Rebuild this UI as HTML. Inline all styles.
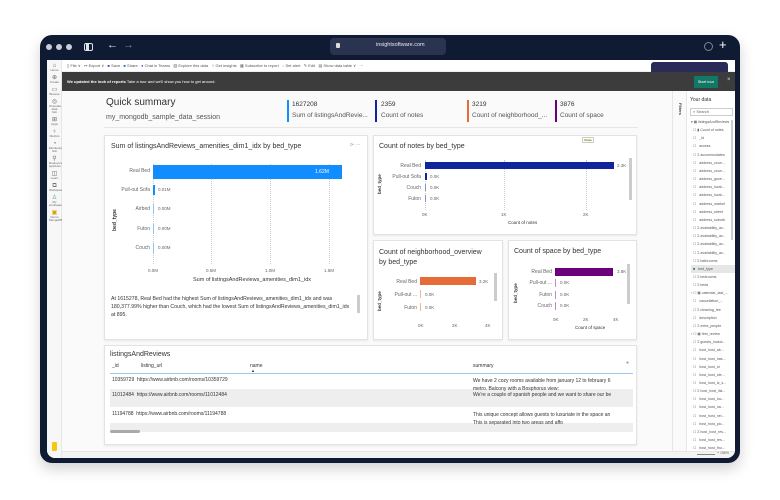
<!DOCTYPE html>
<html><head><meta charset="utf-8"><style>
*{margin:0;padding:0;box-sizing:border-box}
body{width:780px;height:500px;background:#fff;font-family:"Liberation Sans",sans-serif;position:relative;overflow:hidden;color:#333}
.a{position:absolute}
.win{left:40px;top:35px;width:700px;height:428px;background:#0f1a33;border-radius:12px;box-shadow:0 6px 14px rgba(0,0,0,.18)}
.content{left:47px;top:60px;width:688px;height:398px;background:#fff;border-radius:0 0 8px 8px;overflow:hidden}
.t{font-size:4px;color:#444;white-space:nowrap}
.card{background:#fff;border:1px solid #e3e3e3;box-shadow:0 1px 2px rgba(0,0,0,.08)}
.ttl{font-size:7px;color:#333;white-space:nowrap}
.lbl{font-size:5px;color:#666;white-space:nowrap;text-align:right}
.ax{font-size:4.5px;color:#666;white-space:nowrap}
.grid{border-left:1px dotted #ccc}
.row{font-size:5px;color:#333;white-space:nowrap}
</style></head><body>
<div class="a win"></div>
<!-- browser bar -->
<div class="a" style="left:46px;top:44px;width:6px;height:6px;border-radius:50%;background:#c8ccd6"></div>
<div class="a" style="left:56px;top:44px;width:6px;height:6px;border-radius:50%;background:#c8ccd6"></div>
<div class="a" style="left:66px;top:44px;width:6px;height:6px;border-radius:50%;background:#c8ccd6"></div>
<div class="a" style="left:84px;top:43px;width:9px;height:8px;border:1.3px solid #e0e3ea;border-radius:2px"></div>
<div class="a" style="left:86px;top:43px;width:3px;height:8px;background:#e0e3ea"></div>
<div class="a" style="left:107px;top:39px;color:#e8eaf0;font-size:11px">←</div>
<div class="a" style="left:123px;top:39px;color:#7d8497;font-size:11px">→</div>
<div class="a" style="left:330px;top:38px;width:116px;height:17px;background:#2a3450;border-radius:4px"></div>
<div class="a" style="left:336px;top:43px;width:4px;height:5px;background:#ddd;border-radius:1px"></div>
<div class="a" style="left:376px;top:42px;font-size:5.5px;color:#e8eaf0">insightsoftware.com</div>
<div class="a" style="left:704px;top:42px;width:9px;height:9px;border:1px solid #7d8497;border-radius:50%"></div>
<div class="a" style="left:719px;top:37px;color:#fff;font-size:13px">+</div>

<div class="a content">
 <!-- toolbar -->
 <div class="a" style="left:15px;top:0;width:673px;height:12px;background:#fff;border-bottom:1px solid #eee"></div>
 <div class="a t" style="left:20px;top:3px;color:#555">▯ File ∨ &nbsp; ↦ Export ∨ &nbsp; <span style="color:#5b4cb0">■</span> Save &nbsp; <span style="color:#3b6fb6">■</span> Share &nbsp; <span style="color:#5b5fc7">●</span> Chat in Teams &nbsp; ▥ Explore this data &nbsp; ♀ Get insights &nbsp; ▦ Subscribe to report &nbsp; ◌ Set alert &nbsp; ✎ Edit &nbsp; ▤ Show data table ∨ &nbsp; ···</div>
 <div class="a" style="left:604px;top:2px;width:77px;height:14px;background:#2b2b5a;border-radius:3px"></div>
 <!-- left nav -->
 <div class="a" style="left:0;top:0;width:15px;height:398px;background:#f7f7f7;border-right:1px solid #e6e6e6"></div>
 <div class="a" style="left:2px;top:3px;width:11px;line-height:1;font-size:3px;color:#666;text-align:center">
  <div style="font-size:6px">⌂</div>Home<br><br>
  <div style="font-size:6px">⊕</div>Create<br><br>
  <div style="font-size:6px">▭</div>Browse<br><br>
  <div style="font-size:6px">◎</div>OneLake<br>data hub<br><br>
  <div style="font-size:6px">⊞</div>Apps<br><br>
  <div style="font-size:6px">♀</div>Metrics<br><br>
  <div style="font-size:6px">◔</div>Monitoring<br>hub<br><br>
  <div style="font-size:6px">⚲</div>Deployment<br>pipelines<br><br>
  <div style="font-size:6px">◫</div>Learn<br><br>
  <div style="font-size:6px">⧉</div>Workspaces<br><br>
  <div style="font-size:6px;color:#4aa88f">♙</div>My<br>workspace<br><br>
  <div style="font-size:6px;color:#d9a300">▣</div>Demo<br>MongoDB
 </div>
 <div class="a" style="left:5px;top:382px;width:5px;height:9px;background:#f2c811;border-radius:1px"></div>
 <!-- banner -->
 <div class="a" style="left:15px;top:12px;width:673px;height:19px;background:#3c3c3c"></div>
 <div class="a" style="left:20px;top:19px;font-size:4px;color:#fff;white-space:nowrap"><b>We updated the look of reports</b> Take a tour and we'll show you how to get around.</div>
 <div class="a" style="left:647px;top:16px;width:24px;height:12px;background:#117865;color:#fff;font-size:4px;text-align:center;line-height:12px">Start tour</div>
 <div class="a" style="left:680px;top:17px;font-size:6px;color:#ddd">×</div>
 <!-- canvas -->
 <div class="a" style="left:15px;top:31px;width:610px;height:360px;background:#fafafa"></div>
 <div class="a" style="left:59px;top:37px;font-size:10px;color:#333">Quick summary</div>
 <div class="a" style="left:59px;top:54px;font-size:7px;color:#555">my_mongodb_sample_data_session</div>
 <div class="a" style="left:240px;top:40px;width:1.5px;height:22px;background:#118dff"></div>
 <div class="a" style="left:245px;top:41px;font-size:6.5px;color:#333">1627208</div>
 <div class="a" style="left:245px;top:52px;font-size:6.5px;color:#555">Sum of listingsAndRevie...</div>
 <div class="a" style="left:328px;top:40px;width:1.5px;height:22px;background:#12239e"></div>
 <div class="a" style="left:334px;top:41px;font-size:6.5px;color:#333">2359</div>
 <div class="a" style="left:334px;top:52px;font-size:6.5px;color:#555">Count of notes</div>
 <div class="a" style="left:420px;top:40px;width:1.5px;height:22px;background:#e66c37"></div>
 <div class="a" style="left:425px;top:41px;font-size:6.5px;color:#333">3219</div>
 <div class="a" style="left:425px;top:52px;font-size:6.5px;color:#555">Count of neighborhood_...</div>
 <div class="a" style="left:508px;top:40px;width:1.5px;height:22px;background:#6b007b"></div>
 <div class="a" style="left:513px;top:41px;font-size:6.5px;color:#333">3876</div>
 <div class="a" style="left:513px;top:52px;font-size:6.5px;color:#555">Count of space</div>
 <div class="a" style="left:57px;top:67px;width:534px;height:1px;background:#e6e6e6"></div>

 <!-- card 1 -->
 <div class="a card" style="left:57px;top:75px;width:264px;height:205px">
  <div class="a ttl" style="left:6px;top:7px">Sum of listingsAndReviews_amenities_dim1_idx by bed_type</div>
  <div class="a" style="left:245px;top:6px;font-size:5px;color:#999">⊳ ···</div>
  <div class="a" style="left:7px;top:60px;font-size:5px;font-weight:bold;transform:rotate(-90deg);transform-origin:left top;top:95px">bed_type</div>
  <div class="a grid" style="left:48px;top:28px;height:100px"></div>
  <div class="a grid" style="left:106px;top:28px;height:100px"></div>
  <div class="a grid" style="left:165px;top:28px;height:100px"></div>
  <div class="a grid" style="left:224px;top:28px;height:100px"></div>
  <div class="a lbl" style="left:0;top:32px;width:45px">Real Bed</div>
  <div class="a" style="left:48px;top:29px;width:189px;height:14px;background:#118dff"></div>
  <div class="a" style="left:210px;top:33px;font-size:5px;color:#fff">1.62M</div>
  <div class="a lbl" style="left:0;top:51px;width:45px">Pull-out Sofa</div>
  <div class="a lbl" style="left:0;top:70px;width:45px">Airbed</div>
  <div class="a lbl" style="left:0;top:90px;width:45px">Futon</div>
  <div class="a lbl" style="left:0;top:109px;width:45px">Couch</div>
  <div class="a" style="left:48px;top:49px;width:1.5px;height:10px;background:#118dff"></div>
  <div class="a" style="left:48px;top:68px;width:1px;height:10px;background:#8cc4ff"></div>
  <div class="a" style="left:48px;top:88px;width:1px;height:10px;background:#8cc4ff"></div>
  <div class="a" style="left:48px;top:107px;width:1px;height:10px;background:#8cc4ff"></div>
  <div class="a ax" style="left:53px;top:51px">0.01M</div>
  <div class="a ax" style="left:53px;top:70px">0.00M</div>
  <div class="a ax" style="left:53px;top:90px">0.00M</div>
  <div class="a ax" style="left:53px;top:109px">0.00M</div>
  <div class="a ax" style="left:43px;top:132px">0.0M</div>
  <div class="a ax" style="left:101px;top:132px">0.5M</div>
  <div class="a ax" style="left:160px;top:132px">1.0M</div>
  <div class="a ax" style="left:219px;top:132px">1.5M</div>
  <div class="a" style="left:88px;top:141px;font-size:5.5px;color:#333;white-space:nowrap">Sum of listingsAndReviews_amenities_dim1_idx</div>
  <div class="a" style="left:6px;top:159px;width:240px;font-size:5.2px;line-height:8px;color:#333">At 1615278, Real Bed had the highest Sum of listingsAndReviews_amenities_dim1_idx and was 180,377.99% higher than Couch, which had the lowest Sum of listingsAndReviews_amenities_dim1_idx at 895.</div>
  <div class="a" style="left:252px;top:159px;width:3px;height:18px;background:#ccc"></div>
 </div>

 <!-- card 2 -->
 <div class="a card" style="left:326px;top:75px;width:264px;height:100px">
  <div class="a ttl" style="left:5px;top:7px">Count of notes by bed_type</div>
  <div class="a" style="left:208px;top:1px;font-size:3px;background:#ffffe0;border:1px solid #ccc;padding:0 1px">Close</div>
  <div class="a" style="left:3px;top:58px;font-size:4.5px;font-weight:bold;transform:rotate(-90deg);transform-origin:left top">bed_type</div>
  <div class="a grid" style="left:51px;top:24px;height:50px"></div>
  <div class="a grid" style="left:130px;top:24px;height:50px"></div>
  <div class="a grid" style="left:212px;top:24px;height:50px"></div>
  <div class="a lbl" style="left:0;top:27px;width:47px">Real Bed</div>
  <div class="a lbl" style="left:0;top:38px;width:47px">Pull-out Sofa</div>
  <div class="a lbl" style="left:0;top:49px;width:47px">Couch</div>
  <div class="a lbl" style="left:0;top:60px;width:47px">Futon</div>
  <div class="a" style="left:51px;top:26px;width:189px;height:7px;background:#12239e"></div>
  <div class="a ax" style="left:243px;top:27px">2.3K</div>
  <div class="a" style="left:51px;top:37px;width:1.5px;height:7px;background:#12239e"></div>
  <div class="a" style="left:51px;top:48px;width:1px;height:7px;background:#8890d0"></div>
  <div class="a" style="left:51px;top:59px;width:1px;height:7px;background:#8890d0"></div>
  <div class="a ax" style="left:56px;top:38px">0.0K</div>
  <div class="a ax" style="left:56px;top:49px">0.0K</div>
  <div class="a ax" style="left:56px;top:60px">0.0K</div>
  <div class="a" style="left:255px;top:22px;width:3px;height:42px;background:#ccc"></div>
  <div class="a ax" style="left:48px;top:76px">0K</div>
  <div class="a ax" style="left:127px;top:76px">1K</div>
  <div class="a ax" style="left:209px;top:76px">2K</div>
  <div class="a" style="left:134px;top:84px;font-size:4.5px;color:#333">Count of notes</div>
 </div>

 <!-- card 3 -->
 <div class="a card" style="left:326px;top:180px;width:130px;height:100px">
  <div class="a ttl" style="left:5px;top:7px;line-height:10px">Count of neighborhood_overview<br>by bed_type</div>
  <div class="a" style="left:3px;top:70px;font-size:4.5px;font-weight:bold;transform:rotate(-90deg);transform-origin:left top">bed_type</div>
  <div class="a lbl" style="left:0;top:38px;width:43px">Real Bed</div>
  <div class="a lbl" style="left:0;top:51px;width:43px">Pull-out ...</div>
  <div class="a lbl" style="left:0;top:64px;width:43px">Futon</div>
  <div class="a" style="left:46px;top:36px;width:56px;height:8px;background:#e66c37"></div>
  <div class="a ax" style="left:105px;top:38px">3.2K</div>
  <div class="a" style="left:46px;top:49px;width:1px;height:8px;background:#f2b497"></div>
  <div class="a" style="left:46px;top:62px;width:1px;height:8px;background:#f2b497"></div>
  <div class="a ax" style="left:51px;top:51px">0.0K</div>
  <div class="a ax" style="left:51px;top:64px">0.0K</div>
  <div class="a" style="left:120px;top:32px;width:3px;height:28px;background:#ccc"></div>
  <div class="a ax" style="left:44px;top:82px">0K</div>
  <div class="a ax" style="left:78px;top:82px">2K</div>
  <div class="a ax" style="left:111px;top:82px">4K</div>
 </div>

 <!-- card 4 -->
 <div class="a card" style="left:461px;top:180px;width:129px;height:100px">
  <div class="a ttl" style="left:5px;top:7px">Count of space by bed_type</div>
  <div class="a" style="left:4px;top:62px;font-size:4.5px;font-weight:bold;transform:rotate(-90deg);transform-origin:left top">bed_type</div>
  <div class="a lbl" style="left:0;top:28px;width:43px">Real Bed</div>
  <div class="a lbl" style="left:0;top:39px;width:43px">Pull-out ...</div>
  <div class="a lbl" style="left:0;top:51px;width:43px">Futon</div>
  <div class="a lbl" style="left:0;top:62px;width:43px">Couch</div>
  <div class="a" style="left:46px;top:27px;width:58px;height:8px;background:#6b007b"></div>
  <div class="a ax" style="left:108px;top:28px">3.8K</div>
  <div class="a" style="left:46px;top:38px;width:1px;height:8px;background:#c08ac8"></div>
  <div class="a" style="left:46px;top:50px;width:1px;height:8px;background:#c08ac8"></div>
  <div class="a" style="left:46px;top:61px;width:1px;height:8px;background:#c08ac8"></div>
  <div class="a ax" style="left:51px;top:39px">0.0K</div>
  <div class="a ax" style="left:51px;top:51px">0.0K</div>
  <div class="a ax" style="left:51px;top:62px">0.0K</div>
  <div class="a" style="left:118px;top:23px;width:3px;height:40px;background:#ccc"></div>
  <div class="a ax" style="left:44px;top:76px">0K</div>
  <div class="a ax" style="left:74px;top:76px">2K</div>
  <div class="a ax" style="left:104px;top:76px">4K</div>
  <div class="a" style="left:66px;top:84px;font-size:4.5px;color:#333">Count of space</div>
 </div>

 <!-- table -->
 <div class="a card" style="left:57px;top:285px;width:533px;height:100px;overflow:hidden">
  <div class="a ttl" style="left:5px;top:5px">listingsAndReviews</div>
  <div class="a" style="left:521px;top:14px;font-size:5px;color:#999">●</div>
  <div class="a row" style="left:7px;top:17px">_id</div>
  <div class="a row" style="left:36px;top:17px">listing_url</div>
  <div class="a row" style="left:145px;top:17px">name</div>
  <div class="a row" style="left:146px;top:22px;font-size:4px">▲</div>
  <div class="a row" style="left:368px;top:17px">summary</div>
  <div class="a" style="left:5px;top:27px;width:523px;height:1px;background:#9cc7ee"></div>
  <div class="a" style="left:5px;top:43px;width:523px;height:18px;background:#eee"></div>
  <div class="a" style="left:5px;top:77px;width:523px;height:9px;background:#eee"></div>
  <div class="a row" style="left:7px;top:31px">10359729 &nbsp;https://www.airbnb.com/rooms/10359729</div>
  <div class="a row" style="left:368px;top:31px;line-height:8px">We have 2 cozy rooms available from january 12 to february 6<br>metro. Balcony with a Bosphorus view:</div>
  <div class="a row" style="left:7px;top:46px">11012484 &nbsp;https://www.airbnb.com/rooms/11012484</div>
  <div class="a row" style="left:368px;top:46px">We're a couple of spanish people and we want to share our be</div>
  <div class="a row" style="left:7px;top:65px">11194788 &nbsp;https://www.airbnb.com/rooms/11194788</div>
  <div class="a row" style="left:368px;top:65px;line-height:8px">This unique concept allows guests to luxuriate in the space an<br>This is separated into two areas and affo</div>
  <div class="a" style="left:5px;top:84px;width:30px;height:3px;background:#aaa;border-radius:2px"></div>
 </div>

 <!-- filters + data pane -->
 <div class="a" style="left:625px;top:31px;width:14px;height:360px;background:#fafafa;border-left:1px solid #e6e6e6"></div>
 <div class="a" style="left:630px;top:43px;font-size:4px;color:#444;transform:rotate(90deg);transform-origin:left top;left:636px;font-weight:bold">Filters</div>
 <div class="a" style="left:639px;top:31px;width:49px;height:360px;background:#fff;border-left:1px solid #e6e6e6"></div>
 <div class="a" style="left:643px;top:37px;font-size:5px;color:#333">Your data</div>
 <div class="a" style="left:643px;top:48px;width:43px;height:8px;border:1px solid #ccc;font-size:4px;color:#666;padding-left:2px;line-height:6px">⌕ Search</div>
 <div class="a" style="left:644px;top:58px;font-size:3.6px;line-height:8.15px;color:#555;white-space:nowrap">
 ▾ ▦ listingsAndReviews<br>
 &nbsp;&nbsp;☐ ▮ Count of notes<br>&nbsp;&nbsp;☐ &nbsp;&nbsp;_id<br>&nbsp;&nbsp;☐ &nbsp;&nbsp;access<br>&nbsp;&nbsp;☐ Σ accommodates<br>&nbsp;&nbsp;☐ &nbsp;&nbsp;address_coun...<br>&nbsp;&nbsp;☐ &nbsp;&nbsp;address_coun...<br>&nbsp;&nbsp;☐ &nbsp;&nbsp;address_gove...<br>&nbsp;&nbsp;☐ &nbsp;&nbsp;address_locat...<br>&nbsp;&nbsp;☐ &nbsp;&nbsp;address_locat...<br>&nbsp;&nbsp;☐ &nbsp;&nbsp;address_market<br>&nbsp;&nbsp;☐ &nbsp;&nbsp;address_street<br>&nbsp;&nbsp;☐ &nbsp;&nbsp;address_suburb<br>&nbsp;&nbsp;☐ Σ availability_av...<br>&nbsp;&nbsp;☐ Σ availability_av...<br>&nbsp;&nbsp;☐ Σ availability_av...<br>&nbsp;&nbsp;☐ Σ availability_av...<br>&nbsp;&nbsp;☐ Σ bathrooms<br><span style="background:#e6e6e6;display:inline-block;width:44px">&nbsp;&nbsp;<span style="color:#117865">■</span> &nbsp;&nbsp;bed_type</span><br>&nbsp;&nbsp;☐ Σ bedrooms<br>&nbsp;&nbsp;☐ Σ beds<br>› ☐ ▦ calendar_last_...<br>&nbsp;&nbsp;☐ &nbsp;&nbsp;cancellation_...<br>&nbsp;&nbsp;☐ Σ cleaning_fee<br>&nbsp;&nbsp;☐ &nbsp;&nbsp;description<br>&nbsp;&nbsp;☐ Σ extra_people<br>› ☐ ▦ first_review<br>&nbsp;&nbsp;☐ Σ guests_includ...<br>&nbsp;&nbsp;☐ &nbsp;&nbsp;host_host_ab...<br>&nbsp;&nbsp;☐ &nbsp;&nbsp;host_host_has...<br>&nbsp;&nbsp;☐ &nbsp;&nbsp;host_host_id<br>&nbsp;&nbsp;☐ &nbsp;&nbsp;host_host_ide...<br>&nbsp;&nbsp;☐ &nbsp;&nbsp;host_host_is_s...<br>&nbsp;&nbsp;☐ Σ host_host_list...<br>&nbsp;&nbsp;☐ &nbsp;&nbsp;host_host_loc...<br>&nbsp;&nbsp;☐ &nbsp;&nbsp;host_host_na...<br>&nbsp;&nbsp;☐ &nbsp;&nbsp;host_host_nei...<br>&nbsp;&nbsp;☐ &nbsp;&nbsp;host_host_pic...<br>&nbsp;&nbsp;☐ Σ host_host_res...<br>&nbsp;&nbsp;☐ &nbsp;&nbsp;host_host_res...<br>&nbsp;&nbsp;☐ &nbsp;&nbsp;host_host_thu...<br>&nbsp;&nbsp;☐ Σ host_host_tot...<br>&nbsp;&nbsp;☐ &nbsp;&nbsp;host_host_url
 </div>
 <div class="a" style="left:684px;top:60px;width:2px;height:120px;background:#ccc"></div>
 <!-- status bar -->
 <div class="a" style="left:15px;top:391px;width:673px;height:7px;background:#f3f3f3;border-top:1px solid #e6e6e6"></div>
 <div class="a" style="left:650px;top:394px;width:18px;height:1px;background:#888"></div>
 <div class="a" style="left:670px;top:391px;font-size:3.5px;color:#666">+ 156%</div>
</div>
</body></html>
